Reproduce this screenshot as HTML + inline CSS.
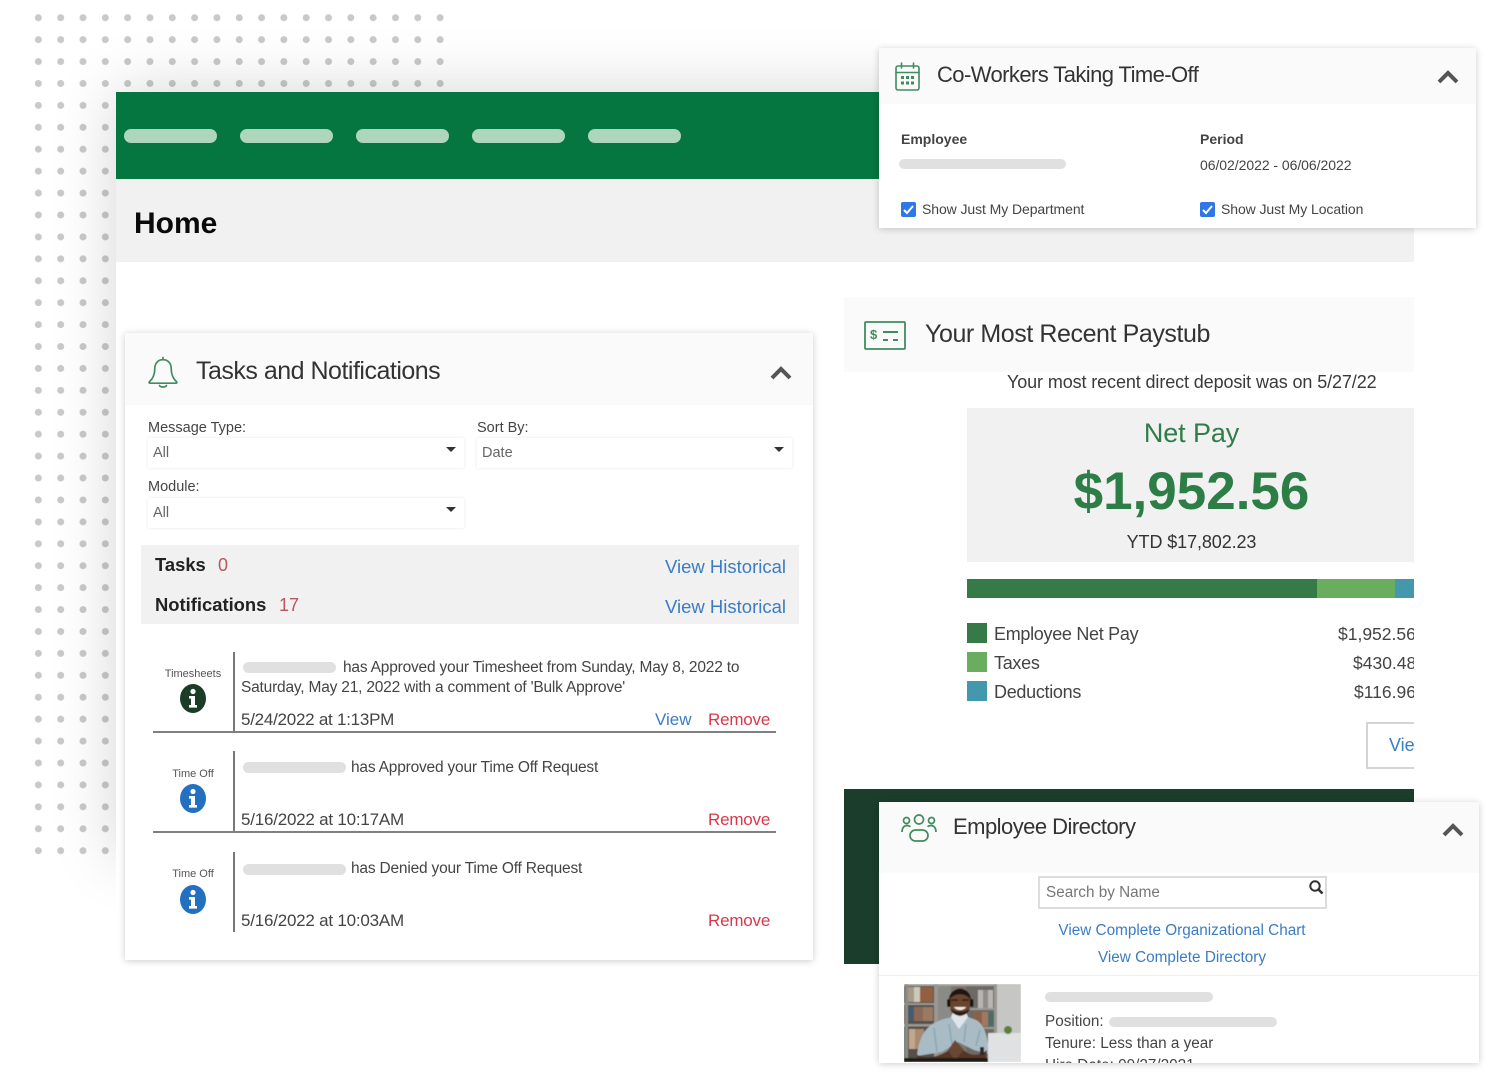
<!DOCTYPE html>
<html lang="en"><head><meta charset="utf-8"><title>Dashboard</title>
<style>
html,body{margin:0;padding:0;background:#fff}
#root{position:relative;width:1494px;height:1078px;overflow:hidden;background:#fff;font-family:"Liberation Sans",Arial,sans-serif;color:#333;filter:blur(.35px)}
.a{position:absolute}
.t{position:absolute;white-space:nowrap;line-height:20px;height:20px}
.pill{position:absolute;background:#e0e0e0;border-radius:6px}
.b{color:#3b7cc4}.r{color:#d8394a}
.card{position:absolute;background:#fff;box-shadow:0 1px 7px rgba(0,0,0,.2);overflow:hidden}
.head{position:absolute;left:0;top:0;right:0;background:#fafafa}
.sel{position:absolute;background:#fff;box-shadow:0 0 3px rgba(0,0,0,.1);height:30px}
.arr{position:absolute;width:0;height:0;border-left:5px solid transparent;border-right:5px solid transparent;border-top:5px solid #333}
.chk{position:absolute;width:15px;height:15px;background:#2f76e8;border-radius:2px}
svg{position:absolute;overflow:visible}
</style></head><body><div id="root">

<svg style="left:0;top:0" width="1494" height="1078">
<defs>
<pattern id="d" patternUnits="userSpaceOnUse" x="27.2" y="6.75" width="22.32" height="21.92"><circle cx="11.16" cy="10.96" r="3.5" fill="#c9c9c9"/></pattern>
</defs>
<rect x="27" y="7" width="89" height="853" fill="url(#d)"/>
<rect x="116" y="7" width="335" height="85" fill="url(#d)"/>
</svg>

<!-- soft panel shadow, limited to the left/top of the page -->
<div class="a" style="left:0;top:0;width:880px;height:1078px;overflow:hidden;clip-path:polygon(0 0,880px 0,880px 92px,116px 92px,116px 1078px,0 1078px)">
 <div class="a" style="left:116px;top:92px;width:1298px;height:765px;background:#fff;box-shadow:0 0 60px rgba(0,0,0,.17)"></div>
</div>

<!-- main panel -->
<div class="a" style="left:116px;top:92px;width:1298px;height:87px;background:#05763f"></div>
<div class="a" style="left:124px;top:129px;width:93px;height:14px;border-radius:7px;background:#aed6bd"></div>
<div class="a" style="left:240px;top:129px;width:93px;height:14px;border-radius:7px;background:#aed6bd"></div>
<div class="a" style="left:356px;top:129px;width:93px;height:14px;border-radius:7px;background:#aed6bd"></div>
<div class="a" style="left:472px;top:129px;width:93px;height:14px;border-radius:7px;background:#aed6bd"></div>
<div class="a" style="left:588px;top:129px;width:93px;height:14px;border-radius:7px;background:#aed6bd"></div>
<div class="a" style="left:116px;top:179px;width:1298px;height:83px;background:#f1f1f1"></div>
<div class="t" style="left:134px;top:214px;font-size:30px;font-weight:700;color:#0a0a0a">Home</div>

<!-- Tasks card -->
<div class="card" style="left:125px;top:333px;width:688px;height:627px">
 <div class="head" style="height:72px"></div>
</div>
<svg style="left:148px;top:356px" width="30" height="33" viewBox="0 0 30 33" fill="none" stroke="#3f8d5e" stroke-width="1.7" stroke-linejoin="round" stroke-linecap="round">
<path d="M15 1.5v2.2M15 3.7c-5 0-8.2 3.6-8.2 8.8 0 6-1.6 10-5.4 13.3-.6.6-.2 1.4.6 1.4h26c.8 0 1.2-.8.6-1.4-3.8-3.300-5.400-7.300-5.400-13.300 0-5.200-3.200-8.800-8.200-8.800z"/><path d="M11.500 29.500c1 2 6 2 7 0"/></svg>
<div class="t" style="left:196px;top:361px;font-size:25px;letter-spacing:-.5px;color:#333">Tasks and Notifications</div>
<svg style="left:770px;top:365px" width="22" height="15" fill="none" stroke="#555" stroke-width="4"><path d="M2 13 L11 4 L20 13"/></svg>

<div class="t" style="left:148px;top:418px;font-size:14.5px;color:#444">Message Type:</div>
<div class="t" style="left:477px;top:418px;font-size:14.5px;color:#444">Sort By:</div>
<div class="sel" style="left:148px;top:438px;width:316px"></div>
<div class="sel" style="left:477px;top:438px;width:315px"></div>
<div class="t" style="left:153px;top:443px;font-size:14.5px;color:#666">All</div>
<div class="t" style="left:482px;top:443px;font-size:14.5px;color:#666">Date</div>
<div class="arr" style="left:446px;top:447px"></div>
<div class="arr" style="left:774px;top:447px"></div>
<div class="t" style="left:148px;top:477px;font-size:14.5px;color:#444">Module:</div>
<div class="sel" style="left:148px;top:498px;width:316px"></div>
<div class="t" style="left:153px;top:503px;font-size:14.5px;color:#666">All</div>
<div class="arr" style="left:446px;top:507px"></div>

<div class="a" style="left:141px;top:545px;width:658px;height:79px;background:#f1f1f1"></div>
<div class="t" style="left:155px;top:555px;font-size:18.4px;font-weight:700;color:#222">Tasks</div>
<div class="t" style="left:218px;top:555px;font-size:18px;color:#b9575a">0</div>
<div class="t" style="left:155px;top:595px;font-size:18.4px;font-weight:700;color:#222">Notifications</div>
<div class="t" style="left:279px;top:595px;font-size:18px;color:#b9575a">17</div>
<div class="t b" style="right:708px;top:557px;font-size:18.5px">View Historical</div>
<div class="t b" style="right:708px;top:597px;font-size:18.5px">View Historical</div>

<!-- items -->
<div class="a" style="left:233px;top:652px;width:1.5px;height:80px;background:#777"></div>
<div class="a" style="left:233px;top:751px;width:1.5px;height:81px;background:#777"></div>
<div class="a" style="left:233px;top:852px;width:1.5px;height:80px;background:#777"></div>
<div class="a" style="left:153px;top:731px;width:623px;height:2px;background:#808080"></div>
<div class="a" style="left:153px;top:831px;width:623px;height:2px;background:#808080"></div>

<div class="t" style="left:143px;width:100px;text-align:center;top:664px;font-size:11px;color:#555">Timesheets</div>
<div class="t" style="left:143px;width:100px;text-align:center;top:764px;font-size:11px;color:#555">Time Off</div>
<div class="t" style="left:143px;width:100px;text-align:center;top:864px;font-size:11px;color:#555">Time Off</div>
<svg style="left:180px;top:684px" width="26" height="29" viewBox="0 0 26 29"><ellipse cx="13" cy="14.5" rx="13" ry="14.5" fill="#1b3d28"/><circle cx="13" cy="7.5" r="2.6" fill="#fff"/><path d="M9 12h6v9h2v2.6H9V21h2v-6.4H9z" fill="#fff"/></svg>
<svg style="left:180px;top:784px" width="26" height="29" viewBox="0 0 26 29"><ellipse cx="13" cy="14.5" rx="13" ry="14.5" fill="#2470c0"/><circle cx="13" cy="7.5" r="2.6" fill="#fff"/><path d="M9 12h6v9h2v2.6H9V21h2v-6.4H9z" fill="#fff"/></svg>
<svg style="left:180px;top:885px" width="26" height="29" viewBox="0 0 26 29"><ellipse cx="13" cy="14.5" rx="13" ry="14.5" fill="#2470c0"/><circle cx="13" cy="7.5" r="2.6" fill="#fff"/><path d="M9 12h6v9h2v2.6H9V21h2v-6.4H9z" fill="#fff"/></svg>

<div class="pill" style="left:243px;top:662px;width:93px;height:11px"></div>
<div class="t" style="left:343px;top:658px;font-size:15.5px;letter-spacing:-.2px;color:#444">has Approved your Timesheet from Sunday, May 8, 2022 to</div>
<div class="t" style="left:241px;top:678px;font-size:15.5px;letter-spacing:-.2px;color:#444">Saturday, May 21, 2022 with a comment of 'Bulk Approve'</div>
<div class="t" style="left:241px;top:710px;font-size:17px;letter-spacing:-.25px;color:#444">5/24/2022 at 1:13PM</div>
<div class="t b" style="left:655px;top:710px;font-size:17px">View</div>
<div class="t r" style="left:708px;top:710px;font-size:17px;letter-spacing:-.2px">Remove</div>

<div class="pill" style="left:243px;top:762px;width:103px;height:11px"></div>
<div class="t" style="left:351px;top:758px;font-size:15.5px;letter-spacing:-.2px;color:#444">has Approved your Time Off Request</div>
<div class="t" style="left:241px;top:810px;font-size:17px;letter-spacing:-.22px;color:#444">5/16/2022 at 10:17AM</div>
<div class="t r" style="left:708px;top:810px;font-size:17px;letter-spacing:-.2px">Remove</div>

<div class="pill" style="left:243px;top:864px;width:103px;height:11px"></div>
<div class="t" style="left:351px;top:859px;font-size:15.5px;letter-spacing:-.2px;color:#444">has Denied your Time Off Request</div>
<div class="t" style="left:241px;top:911px;font-size:17px;letter-spacing:-.22px;color:#444">5/16/2022 at 10:03AM</div>
<div class="t r" style="left:708px;top:911px;font-size:17px;letter-spacing:-.2px">Remove</div>

<!-- Paystub -->
<div class="a" style="left:844px;top:297px;width:570px;height:75px;background:#fafafa"></div>
<svg style="left:864px;top:321px" width="42" height="29" fill="none" stroke="#3f8d5e" stroke-width="1.8"><rect x="1" y="1" width="40" height="27" rx="1"/><path d="M19 11h15M19 19h5M29 19h5" stroke-width="2"/></svg>
<div class="t" style="left:870px;top:325px;font-size:13px;font-weight:700;color:#3f8d5e">$</div>
<div class="t" style="left:925px;top:324px;font-size:25px;letter-spacing:-.42px;color:#333">Your Most Recent Paystub</div>
<div class="t" style="left:1007px;top:372px;font-size:18px;letter-spacing:-.11px;color:#3a3a3a">Your most recent direct deposit was on 5/27/22</div>
<div class="a" style="left:967px;top:408px;width:447px;height:154px;background:#f1f1f1"></div>
<div class="t" style="left:967px;width:449px;text-align:center;top:423px;font-size:27px;letter-spacing:-.1px;color:#2f7d48">Net Pay</div>
<div class="t" style="left:967px;width:449px;text-align:center;top:482px;font-size:53px;font-weight:700;color:#2d7d46">$1,952.56</div>
<div class="t" style="left:967px;width:449px;text-align:center;top:532px;font-size:18px;letter-spacing:-.1px;color:#333">YTD $17,802.23</div>
<div class="a" style="left:967px;top:579px;width:350px;height:19px;background:#357a47"></div>
<div class="a" style="left:1317px;top:579px;width:78px;height:19px;background:#6aad5e"></div>
<div class="a" style="left:1395px;top:579px;width:19px;height:19px;background:#4398ad"></div>
<div class="a" style="left:967px;top:623px;width:20px;height:20px;background:#357a47"></div>
<div class="a" style="left:967px;top:652px;width:20px;height:20px;background:#6aad5e"></div>
<div class="a" style="left:967px;top:681px;width:20px;height:20px;background:#4398ad"></div>
<div class="t" style="left:994px;top:624px;font-size:18px;letter-spacing:-.3px;color:#444">Employee Net Pay</div>
<div class="t" style="left:994px;top:653px;font-size:18px;letter-spacing:-.3px;color:#444">Taxes</div>
<div class="t" style="left:994px;top:682px;font-size:18px;letter-spacing:-.3px;color:#444">Deductions</div>
<div class="a" style="left:1300px;top:620px;width:114px;height:90px;overflow:hidden">
 <div class="t" style="left:38px;top:4px;font-size:17.5px;color:#444">$1,952.56</div>
 <div class="t" style="left:53px;top:33px;font-size:17.5px;color:#444">$430.48</div>
 <div class="t" style="left:54px;top:62px;font-size:17.5px;color:#444">$116.96</div>
</div>
<div class="a" style="left:1366px;top:722px;width:48px;height:47px;overflow:hidden">
 <div class="a" style="left:0;top:0;width:80px;height:43px;border:2px solid #d4d4d4"></div>
 <div class="t b" style="left:23px;top:13px;font-size:18px">View</div>
</div>
<div class="a" style="left:844px;top:789px;width:570px;height:175px;background:#1b3d2b"></div>

<!-- Co-workers card -->
<div class="card" style="left:879px;top:48px;width:597px;height:180px">
 <div class="head" style="height:56px"></div>
</div>
<svg style="left:895px;top:62px" width="25" height="29" viewBox="0 0 25 29" fill="none" stroke="#3f8d5e" stroke-width="1.6"><rect x="1" y="4" width="23" height="24" rx="2"/><path d="M1 10.500h23M6.500 1v5M18.500 1v5" stroke-linecap="round"/><g fill="#3f8d5e" stroke="none"><rect x="6" y="14" width="3" height="3"/><rect x="11" y="14" width="3" height="3"/><rect x="16" y="14" width="3" height="3"/><rect x="6" y="19.500" width="3" height="3"/><rect x="11" y="19.500" width="3" height="3"/><rect x="16" y="19.500" width="3" height="3"/></g></svg>
<div class="t" style="left:937px;top:65px;font-size:22px;letter-spacing:-.58px;color:#333">Co-Workers Taking Time-Off</div>
<svg style="left:1437px;top:69px" width="22" height="15" fill="none" stroke="#555" stroke-width="4"><path d="M2 13 L11 4 L20 13"/></svg>
<div class="t" style="left:901px;top:129px;font-size:14px;font-weight:700;color:#444">Employee</div>
<div class="t" style="left:1200px;top:129px;font-size:14px;font-weight:700;color:#444">Period</div>
<div class="pill" style="left:899px;top:159px;width:167px;height:10px"></div>
<div class="t" style="left:1200px;top:155px;font-size:14px;letter-spacing:-.05px;color:#444">06/02/2022 - 06/06/2022</div>
<div class="chk" style="left:901px;top:202px"></div>
<svg style="left:901px;top:202px" width="15" height="15" fill="none" stroke="#fff" stroke-width="2"><path d="M3 8l3 3 6-7"/></svg>
<div class="t" style="left:922px;top:199px;font-size:14px;letter-spacing:-.08px;color:#444">Show Just My Department</div>
<div class="chk" style="left:1200px;top:202px"></div>
<svg style="left:1200px;top:202px" width="15" height="15" fill="none" stroke="#fff" stroke-width="2"><path d="M3 8l3 3 6-7"/></svg>
<div class="t" style="left:1221px;top:199px;font-size:14px;letter-spacing:-.08px;color:#444">Show Just My Location</div>

<!-- Directory card -->
<div class="card" style="left:879px;top:802px;width:600px;height:261px">
 <div class="head" style="height:71px"></div>
 <div class="a" style="left:0;top:173px;width:600px;height:1px;background:#f0f0f0"></div>
 <div class="t" style="left:166px;top:254px;font-size:15.3px;color:#444">Hire Date: 09/27/2021</div>
</div>
<svg style="left:901px;top:814px" width="36" height="28" viewBox="0 0 36 28" fill="none" stroke="#3f8d5e" stroke-width="1.7"><circle cx="18" cy="5.500" r="4.500"/><circle cx="5.500" cy="6.500" r="3"/><circle cx="30.500" cy="6.500" r="3"/><rect x="9" y="16" width="18" height="11" rx="5.500"/><path d="M1 18c0-4 2-6.500 5-6.500 1.500 0 2.500.4 3.500 1.200M35 18c0-4-2-6.500-5-6.500-1.500 0-2.500.4-3.500 1.200"/></svg>
<div class="t" style="left:953px;top:817px;font-size:22px;letter-spacing:-.53px;color:#333">Employee Directory</div>
<svg style="left:1442px;top:822px" width="22" height="15" fill="none" stroke="#555" stroke-width="4"><path d="M2 13 L11 4 L20 13"/></svg>
<div class="a" style="left:1038px;top:876px;width:285px;height:29px;border:2px solid #dcdcdc"></div>
<div class="t" style="left:1046px;top:883px;font-size:15.3px;color:#777">Search by Name</div>
<svg style="left:1308px;top:879px" width="16" height="16" fill="none" stroke="#333" stroke-width="2"><circle cx="7" cy="7" r="4.700"/><path d="M10.500 10.500L14.500 14.500" stroke-width="2.600"/></svg>
<div class="t b" style="left:979px;width:406px;text-align:center;top:921px;font-size:15.3px">View Complete Organizational Chart</div>
<div class="t b" style="left:979px;width:406px;text-align:center;top:948px;font-size:15.3px">View Complete Directory</div>

<svg style="left:904px;top:984px" width="117" height="78" viewBox="0 0 117 78">
<defs><filter id="bl"><feGaussianBlur stdDeviation=".6"/></filter><clipPath id="pc"><rect width="117" height="78"/></clipPath></defs>
<g clip-path="url(#pc)"><g filter="url(#bl)">
<rect width="117" height="78" fill="#7a7873"/>
<rect x="0" y="0" width="33" height="78" fill="#55504b"/>
<rect x="33" y="0" width="14" height="78" fill="#8a8a86"/>
<rect x="62" y="0" width="31" height="78" fill="#6d6a66"/>
<rect x="93" y="0" width="24" height="78" fill="#c6c6c4"/>
<rect x="4" y="3" width="6" height="15" fill="#a89a88"/><rect x="10" y="3" width="6" height="15" fill="#cfc8bd"/><rect x="16" y="3" width="13" height="15" fill="#92603f"/>
<rect x="4" y="23" width="6" height="14" fill="#4a5a6a"/><rect x="10" y="23" width="9" height="14" fill="#8a6a55"/><rect x="19" y="23" width="10" height="14" fill="#9a7a62"/>
<rect x="5" y="45" width="6" height="20" fill="#c0a78e"/><rect x="11" y="45" width="9" height="20" fill="#a88a72"/>
<rect x="74" y="6" width="5" height="18" fill="#b8b6b2"/><rect x="79" y="6" width="5" height="18" fill="#8f8d8a"/><rect x="84" y="6" width="5" height="18" fill="#b8b6b2"/>
<rect x="70" y="28" width="8" height="14" fill="#8d5f48"/><rect x="78" y="28" width="6" height="14" fill="#a07a60"/><rect x="84" y="28" width="6" height="14" fill="#4f6a6a"/>
<rect x="0" y="0" width="93" height="2" fill="#a5a4a0"/>
<rect x="0" y="19" width="33" height="2" fill="#9a9892"/><rect x="0" y="40" width="33" height="2.500" fill="#9a9892"/>
<rect x="62" y="24" width="31" height="2" fill="#9a9892"/><rect x="62" y="43" width="31" height="2" fill="#9a9892"/>
<rect x="1" y="0" width="3" height="78" fill="#8e8c86"/><rect x="30" y="0" width="4" height="78" fill="#9a9892"/><rect x="90" y="0" width="3" height="50" fill="#9a9892"/>
<path d="M13 72C15 52 22 40 40 35L48 33H64L72 36C80 40 84 52 85 70L70 66 54 58 38 68Z" fill="#a9bcc6"/>
<path d="M30 44L33 68M76 46L72 62M45 40L48 60M62 40L60 58" stroke="#8fa4b0" stroke-width="1.500" fill="none"/>
<path d="M47 33L55 45 64 33 62 28H49Z" fill="#dfe6ea"/>
<ellipse cx="56" cy="18" rx="10.500" ry="14" fill="#6a442e"/>
<path d="M45 17C44 1 68 1 67 17C64 8 48 8 45 17Z" fill="#1e1814"/>
<rect x="43" y="15" width="3.500" height="8" rx="1.700" fill="#141210"/><rect x="66" y="15" width="3.500" height="8" rx="1.700" fill="#141210"/>
<path d="M47 16h7M58 16h7" stroke="#2a211b" stroke-width="1.500"/>
<path d="M50 23C52 27 60 27 62 23Z" fill="#efe9e1"/>
<path d="M46 24C48 34 64 34 66 24C63 29 49 29 46 24Z" fill="#2c1c14"/>
<path d="M12 70C20 76 40 74 51 60L62 68C68 72 76 72 83 66L82 76H14Z" fill="#563626"/>
<path d="M51 56L44 66 51 76 60 66Z" fill="#6a4632"/>
<rect x="76" y="63" width="4" height="8" fill="#2a2a2a"/>
<rect x="0" y="74" width="117" height="4" fill="#1c1a18"/>
<rect x="84" y="49" width="33" height="29" rx="1" fill="#dfe1e3"/>
<circle cx="104" cy="46" r="4" fill="#5b7f3e"/>
</g></g></svg>

<div class="pill" style="left:1045px;top:992px;width:168px;height:10px"></div>
<div class="t" style="left:1045px;top:1012px;font-size:15.3px;color:#444">Position:</div>
<div class="pill" style="left:1109px;top:1017px;width:168px;height:10px"></div>
<div class="t" style="left:1045px;top:1034px;font-size:15.3px;color:#444">Tenure: Less than a year</div>
</div></body></html>
